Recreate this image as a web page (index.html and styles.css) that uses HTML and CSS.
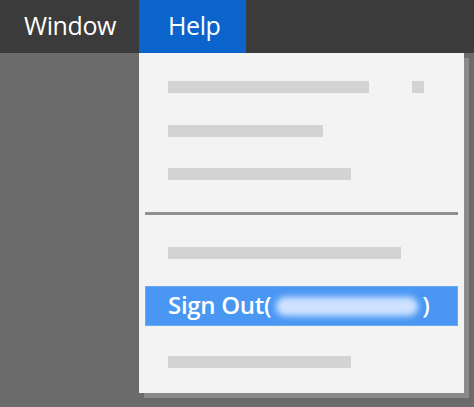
FILE: index.html
```html
<!DOCTYPE html>
<html>
<head>
<meta charset="utf-8">
<link rel="stylesheet" href="styles.css">
</head>
<body>
<div class="menubar">
  <div class="mb-item window">Window</div>
  <div class="mb-item help">Help</div>
</div>
<div class="dropdown">
  <div class="row r1"><span class="bar b1"></span><span class="sq"></span></div>
  <div class="row r2"><span class="bar b2"></span></div>
  <div class="row r3"><span class="bar b3"></span></div>
  <div class="sep"></div>
  <div class="row r4"><span class="bar b4"></span></div>
  <div class="signout"><span class="so-text">Sign Out(</span><span class="blur"></span><span class="so-text close">)</span></div>
  <div class="row r5"><span class="bar b3"></span></div>
</div>
</body>
</html>
```
FILE: styles.css
```css
html, body {
  margin: 0;
  padding: 0;
}
body {
  width: 474px;
  height: 407px;
  background: #6b6b6b;
  position: relative;
  overflow: hidden;
  font-family: "Open Sans", "Noto Sans", sans-serif;
}
.menubar {
  height: 53px;
  background: #3b3b3b;
  display: flex;
  align-items: stretch;
  position: relative;
  z-index: 2;
}
.mb-item {
  color: #fff;
  font-size: 25px;
  font-weight: 500;
  letter-spacing: -0.4px;
  display: flex;
  align-items: center;
  padding-bottom: 3px;
  box-sizing: border-box;
}
.window {
  padding-left: 24px;
  width: 139px;
}
.help {
  background: #0b64cc;
  width: 107px;
  padding-left: 29px;
}
.dropdown {
  position: absolute;
  left: 139px;
  top: 53px;
  width: 325px;
  height: 340px;
  box-sizing: border-box;
  background: #f3f3f3;
  box-shadow: 5px 5px 0 #8a8a8a;
  padding: 28px 6px 0 6px;
  display: flex;
  flex-direction: column;
  z-index: 1;
}
.row {
  height: 12px;
  display: flex;
  padding-left: 23px;
}
.bar {
  display: block;
  height: 12px;
  background: #d3d3d3;
}
.b1 { width: 201px; }
.b2 { width: 155px; }
.b3 { width: 183px; }
.b4 { width: 233px; }
.sq {
  width: 12px;
  height: 12px;
  background: #d3d3d3;
  margin-left: 43px;
}
.r2 { margin-top: 32px; }
.r3 { margin-top: 31px; }
.sep {
  margin-top: 32px;
  height: 3px;
  background: #8f8f8f;
}
.r4 { margin-top: 32px; }
.signout {
  margin-top: 27px;
  height: 40px;
  background: #4a97f3;
  box-sizing: border-box;
  border: 1px solid #6aaaf5;
  display: flex;
  align-items: center;
  padding-left: 22px;
  padding-bottom: 3px;
}
.so-text {
  color: #fff;
  font-size: 24px;
  font-weight: 600;
  letter-spacing: -0.3px;
}
.blur {
  width: 142px;
  height: 19px;
  margin-left: 5px;
  margin-top: 4px;
  border-radius: 9px;
  background: #cfe2ff;
  filter: blur(3px);
}
.close {
  margin-left: 4px;
}
.r5 { margin-top: 30px; }
```
